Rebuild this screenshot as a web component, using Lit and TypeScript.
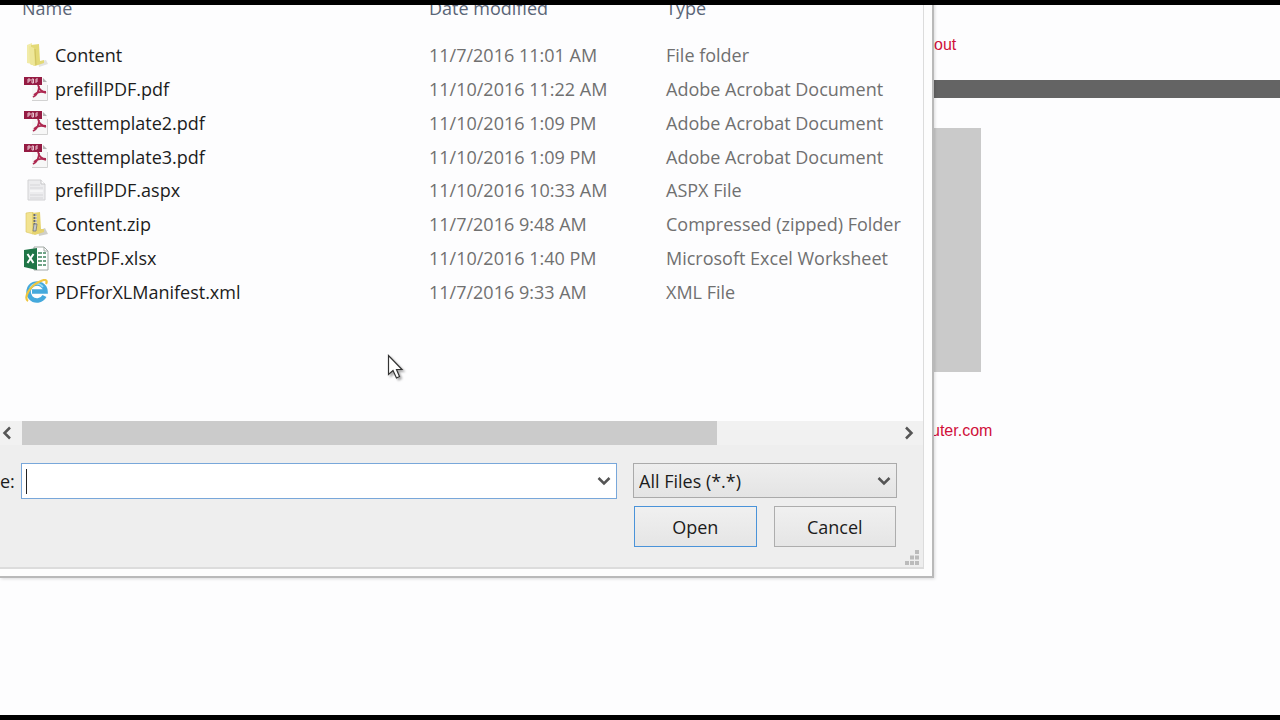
import { LitElement, html, css, svg } from "lit";
import { customElement, state } from "lit/decorators.js";

type Kind = "folder" | "pdf" | "page" | "zip" | "excel" | "ie";

interface FileRow {
  kind: Kind;
  name: string;
  date: string;
  type: string;
}

const FILES: FileRow[] = [
  { kind: "folder", name: "Content", date: "11/7/2016 11:01 AM", type: "File folder" },
  { kind: "pdf", name: "prefillPDF.pdf", date: "11/10/2016 11:22 AM", type: "Adobe Acrobat Document" },
  { kind: "pdf", name: "testtemplate2.pdf", date: "11/10/2016 1:09 PM", type: "Adobe Acrobat Document" },
  { kind: "pdf", name: "testtemplate3.pdf", date: "11/10/2016 1:09 PM", type: "Adobe Acrobat Document" },
  { kind: "page", name: "prefillPDF.aspx", date: "11/10/2016 10:33 AM", type: "ASPX File" },
  { kind: "zip", name: "Content.zip", date: "11/7/2016 9:48 AM", type: "Compressed (zipped) Folder" },
  { kind: "excel", name: "testPDF.xlsx", date: "11/10/2016 1:40 PM", type: "Microsoft Excel Worksheet" },
  { kind: "ie", name: "PDFforXLManifest.xml", date: "11/7/2016 9:33 AM", type: "XML File" },
];

const ICONS = {
  folder: svg`
    <path d="M14 19 L22 17 L24 21 L15 24 Z" fill="#e3e3e0"/>
    <path d="M3 2 L8 0 L8 21 L3 20 Z" fill="#f1eba8"/>
    <path d="M7 2 L15 1 L16 18 L20 17 L20 20 L11 23 L6 21 Z" fill="#e3d976"/>
    <path d="M5 3 L10 5 L11 23 L6 21 Z" fill="#eee79a"/>
    <path d="M11 6 L12 22" stroke="#cfc261" stroke-width="1"/>`,
  pdf: svg`
    <path d="M8 1 H19 L23 5 V24 H8 Z" fill="#f7f7f7"/>
    <path d="M19 1 L23 5 H19 Z" fill="#b5b5b5"/>
    <path d="M8 23.5 H23.5 V8" fill="none" stroke="#d2d2d2"/>
    <rect x="0" y="0" width="18" height="8" fill="#951b43"/>
    <path d="M4 6 V2 H6 V4 H4 M8 2 V6 H9.500 V2 Z M12 6 V2 H14 M12 4 H14" fill="none" stroke="#e9c5d1" stroke-width="1"/>
    <path d="M14 8 C15 12 17 15 22 15 M15 9 C15 14 13 18 9 20 M10 18 C13 15 17 14 22 16" fill="none" stroke="#ad2850" stroke-width="1.800"/>`,
  page: svg`
    <path d="M4 2 H17 L21 6 V22 H4 Z" fill="#ececee" stroke="#d2d2d4"/>
    <path d="M17 2 V6 H21" fill="#fff" stroke="#c6c6c8"/>
    <path d="M6 7 H16 M6 10 H19 M6 17 H19 M6 20 H19" stroke="#d6d6d9"/>
    <path d="M6 13 H19" stroke="#fff" stroke-width="1"/>`,
  zip: svg`
    <path d="M14 19 L21 16 L24 22 L15 24 Z" fill="#d0cfc8"/>
    <path d="M2 1 L9 0 L9 22 L2 20 Z" fill="#f2e391" stroke="#d8c55c" stroke-width=".6"/>
    <path d="M8 1 L16 0 L17 17 L20 17 L20 20 L11 23 L8 22 Z" fill="#e6d470"/>
    <path d="M11 2 V14" stroke="#686b6d" stroke-width="3" stroke-dasharray="2 1"/>
    <path d="M12 2 V14" stroke="#e4e6e8" stroke-width="1"/>
    <path d="M10 12 L13 12 L12 19 L9 19 Z" fill="#c3c7c9" stroke="#777" stroke-width=".8"/>`,
  excel: svg`
    <path d="M10 1 H20 L24 5 V24 H10 Z" fill="#fff" stroke="#a3aaa6"/>
    <path d="M20 1 V5 H24" fill="none" stroke="#a3aaa6"/>
    <path d="M14 7 H22 M14 11 H22 M14 15 H22 M14 19 H22" stroke="#6fa386" stroke-width="2" stroke-dasharray="4 1"/>
    <path d="M0 4 L13 2 V24 L0 21 Z" fill="#1f7547"/>
    <path d="M3.500 8 L9.500 17 M9.500 8 L3.500 17" stroke="#fff" stroke-width="2"/>`,
  ie: svg`
    <path d="M20.500 17 A8.500 8.500 0 1 1 21.500 12.500 H8" fill="none" stroke="#45a9dc" stroke-width="4.500"/>
    <path d="M6 9 A7.500 7.500 0 0 1 19 8" fill="none" stroke="#9cdcf5" stroke-width="1.500"/>
    <path d="M4 22 C-1 19 6 6 17 2 C21 0 24 1 22 5" fill="none" stroke="#efc63f" stroke-width="2.200"/>`,
};

const chevron = (d: string) => html`
  <svg class="chevron" viewBox="0 0 14 14" aria-hidden="true">
    <path d=${d} fill="none" stroke="#555" stroke-width="2.5" />
  </svg>`;

const DOWN = "M1.500 4 L7 9.500 L12.500 4";
const LEFT = "M10 1.500 L4.500 7 L10 12.500";
const RIGHT = "M4 1.500 L9.500 7 L4 12.500";

@customElement("file-dialog")
export class FileDialog extends LitElement {
  @state() private fileName = "";

  static styles = css`
    :host {
      display: block;
      box-sizing: border-box;
      padding: 0 8px 7px 0;
      border: solid #b9b9b9;
      border-width: 0 2px 2px 0;
      background: #fdfdfd;
      box-shadow: 1px 1px 3px #0002;
      color: #1c1c1c;
      font: 18px/24px "Open Sans", "Noto Sans", sans-serif;
    }
    .client {
      border: solid #dcdcdc;
      border-width: 0 1px 2px 0;
      background: #eee;
    }
    .list {
      background: #fdfdfe;
      padding-bottom: 113px;
    }
    .files {
      width: 100%;
      table-layout: fixed;
      border-collapse: collapse;
    }
    .col-name { width: 420px; }
    .col-date { width: 237px; }
    th {
      height: 24px;
      padding: 0 0 18px 9px;
      text-align: left;
      font-weight: 400;
      color: #5a6577;
    }
    th:first-child, td:first-child { padding-left: 22px; }
    tbody { color: #707070; }
    td {
      height: 34px;
      padding: 0 0 0 9px;
      white-space: nowrap;
    }
    tr:nth-child(4n) td { height: 33px; }
    .file {
      display: flex;
      align-items: center;
      gap: 6px;
      padding-left: 2px;
      color: #1c1c1c;
    }
    .icon {
      width: 25px;
      height: 25px;
      flex: none;
    }
    .scroll {
      display: flex;
      height: 24px;
      background: #f1f1f1;
    }
    button {
      font: inherit;
      color: inherit;
      padding: 0;
    }
    .arrow {
      display: grid;
      place-items: center;
      border: 0;
      background: none;
    }
    .scroll .arrow {
      width: 32px;
      padding-left: 4px;
    }
    .scroll .arrow:first-child {
      width: 22px;
      padding: 0 8px 0 0;
    }
    .track { flex: 1; }
    .thumb {
      width: 80%;
      height: 100%;
      background: #cbcbcb;
    }
    .chevron {
      width: 14px;
      height: 14px;
      display: block;
    }
    .form {
      display: grid;
      grid-template-columns: 14px 1fr 264px;
      gap: 7px 16px;
      padding: 18px 26px 20px 0;
    }
    label { align-self: center; }
    .combo {
      display: flex;
      align-items: center;
      box-sizing: border-box;
      height: 36px;
      margin-left: -9px;
      padding-left: 4px;
      border: 1px solid #78a7da;
      background: #fff;
    }
    .caret {
      width: 1px;
      height: 25px;
      background: #222;
    }
    .combo input {
      flex: 1;
      min-width: 0;
      border: 0;
      outline: 0;
      padding: 0;
      background: none;
      font: inherit;
    }
    .combo .arrow { width: 24px; }
    .filter {
      display: grid;
      grid-template-columns: 1fr 20px;
      align-items: center;
      height: 35px;
    }
    .filter select {
      grid-area: 1 / 1 / 2 / 3;
      appearance: none;
      box-sizing: border-box;
      width: 100%;
      height: 100%;
      padding: 0 5px;
      border: 1px solid #aaa;
      border-radius: 0;
      background: linear-gradient(#eee, #e4e4e4);
      color: inherit;
      font: inherit;
    }
    .filter .chevron {
      grid-area: 1 / 2;
      pointer-events: none;
      z-index: 1;
    }
    .actions {
      grid-column: 3;
      display: grid;
      grid-template-columns: 1fr 1fr;
      gap: 17px;
      padding: 0 1px;
    }
    .action {
      height: 41px;
      border: 1px solid #adadad;
      background: linear-gradient(#f0f0f0, #e5e5e5);
    }
    .primary { border-color: #4a93d9; }
    .grip {
      position: absolute;
      right: 13px;
      bottom: 11px;
      width: 15px;
      height: 15px;
    }
  `;

  render() {
    return html`
      <div class="client">
        <div class="list">
          <table class="files">
            <colgroup>
              <col class="col-name" />
              <col class="col-date" />
              <col />
            </colgroup>
            <thead>
              <tr>
                <th>Name</th>
                <th>Date modified</th>
                <th>Type</th>
              </tr>
            </thead>
            <tbody>
              ${FILES.map(
                (f) => html`<tr>
                  <td>
                    <span class="file">
                      <svg class="icon" viewBox="0 0 25 25" aria-hidden="true">${ICONS[f.kind]}</svg>
                      ${f.name}
                    </span>
                  </td>
                  <td>${f.date}</td>
                  <td>${f.type}</td>
                </tr>`
              )}
            </tbody>
          </table>
        </div>
        <div class="scroll">
          <button class="arrow" aria-label="Scroll left">${chevron(LEFT)}</button>
          <div class="track"><div class="thumb"></div></div>
          <button class="arrow" aria-label="Scroll right">${chevron(RIGHT)}</button>
        </div>
        <form class="form" @submit=${(e: Event) => e.preventDefault()}>
          <label for="file-name">e:</label>
          <div class="combo">
            <span class="caret"></span>
            <input
              id="file-name"
              type="text"
              .value=${this.fileName}
              @input=${(e: Event) => (this.fileName = (e.target as HTMLInputElement).value)}
            />
            <button class="arrow" type="button" aria-label="Recent files">${chevron(DOWN)}</button>
          </div>
          <div class="filter">
            <select aria-label="File type">
              <option>All Files (*.*)</option>
            </select>
            ${chevron(DOWN)}
          </div>
          <div class="actions">
            <button class="action primary" type="submit">Open</button>
            <button class="action" type="button">Cancel</button>
          </div>
        </form>
      </div>
      <svg class="grip" viewBox="0 0 15 15" aria-hidden="true">
        <path
          d="M11 0h4v4h-4z M6 5.500h4v4h-4z M11 5.500h4v4h-4z M1 11h4v4h-4z M6 11h4v4h-4z M11 11h4v4h-4z"
          fill="#bbb"
        />
      </svg>
    `;
  }
}

@customElement("app-root")
export class AppRoot extends LitElement {
  static styles = css`
    :host {
      display: block;
      position: relative;
      box-sizing: border-box;
      height: 100vh;
      overflow: hidden;
      border: solid #000;
      border-width: 5px 0;
      background: #fdfdfe;
    }
    .page {
      padding-left: 931px;
      font: 16px/20px "Liberation Sans", Arial, sans-serif;
    }
    .page a {
      color: #d0103a;
      text-decoration: none;
    }
    .nav {
      padding: 30px 0 25px 3px;
    }
    .bar {
      height: 18px;
      background: #646464;
    }
    .panel {
      width: 50px;
      height: 244px;
      margin: 30px 0 49px;
      background: #cacaca;
    }
    .window {
      position: absolute;
      left: 0;
      top: -9px;
      width: 934px;
    }
  `;

  render() {
    return html`
      <main class="page">
        <nav class="nav"><a href="#about">out</a></nav>
        <div class="bar"></div>
        <div class="panel"></div>
        <a href="#home">uter.com</a>
      </main>
      <file-dialog class="window"></file-dialog>
      <mouse-pointer></mouse-pointer>
    `;
  }
}

@customElement("mouse-pointer")
export class MousePointer extends LitElement {
  static styles = css`
    :host {
      position: absolute;
      left: 387px;
      top: 349px;
      pointer-events: none;
    }
    .pointer {
      display: block;
      width: 18px;
      height: 27px;
      filter: drop-shadow(2px 2px 1px #0005);
    }
  `;

  render() {
    return html`
      <svg class="pointer" viewBox="0 0 18 27" aria-hidden="true">
        <path
          d="M1.500 1.500 V20.500 L6 16.500 L9.500 24 L12.500 22.500 L9.500 15.500 H15 Z"
          fill="#fff"
          stroke="#333"
          stroke-width="1.200"
        />
      </svg>
    `;
  }
}
